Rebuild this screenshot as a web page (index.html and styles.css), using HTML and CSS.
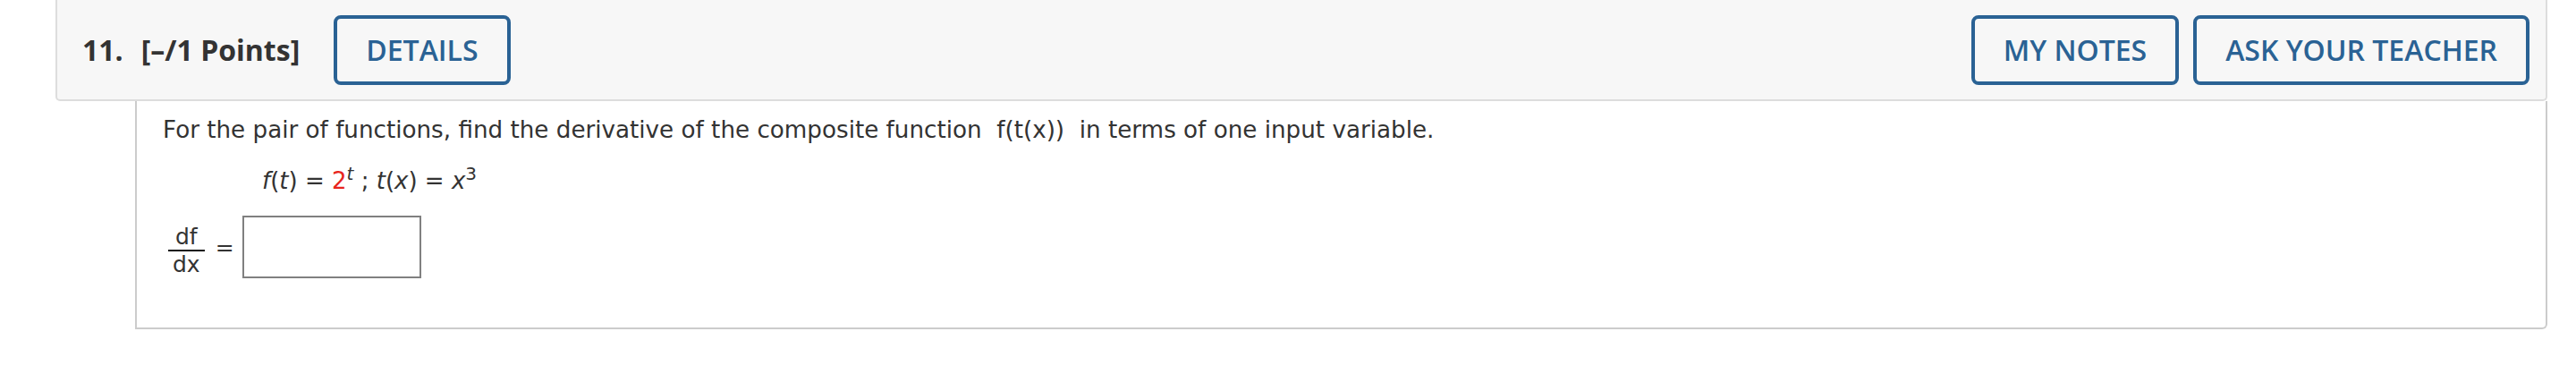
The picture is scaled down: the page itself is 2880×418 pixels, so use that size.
FILE: index.html
```html
<!DOCTYPE html>
<html lang="en">
<head>
<meta charset="utf-8">
<title>Question 11</title>
<link rel="stylesheet" href="styles.css">
</head>
<body>
<div class="question">
  <div class="q-header">
    <div class="q-title">
      <span class="q-num">11.</span>
      <span class="q-points">[–/1 Points]</span>
    </div>
    <button class="btn details">DETAILS</button>
    <div class="spacer"></div>
    <button class="btn">MY NOTES</button>
    <button class="btn">ASK YOUR TEACHER</button>
  </div>
  <div class="q-body">
    <p class="prompt">For the pair of functions, find the derivative of the composite function&nbsp; f(t(x))&nbsp; in terms of one input variable.</p>
    <p class="formula"><i>f</i>(<i>t</i>) = <span class="red">2</span><sup><i>t</i></sup> ; <i>t</i>(<i>x</i>) = <i>x</i><sup>3</sup></p>
    <div class="answer-row">
      <span class="frac"><span class="num">df</span><span class="den">dx</span></span>
      <span class="eq">=</span>
      <input class="answer" type="text" aria-label="answer">
    </div>
  </div>
</div>
</body>
</html>
```
FILE: styles.css
```css
html, body {
  margin: 0;
  padding: 0;
  background: #ffffff;
}
body {
  font-family: "DejaVu Sans", Verdana, sans-serif;
  color: #333333;
}
.question {
  margin-left: 62px;
  width: 2786px;
}
.q-header {
  display: flex;
  align-items: center;
  height: 111px;
  padding: 0 18px 0 28px;
  background: #f7f7f7;
  border: 2px solid #dddddd;
  border-top: none;
  border-radius: 0 0 5px 5px;
  gap: 16px;
}
.q-title {
  font-family: "Open Sans", sans-serif;
  font-weight: 700;
  font-size: 32px;
  color: #333333;
  display: flex;
  gap: 20px;
  margin-right: 22px;
}
.spacer { flex: 1; }
.btn {
  font-family: "Open Sans", sans-serif;
  font-weight: 600;
  font-size: 32px;
  color: #2a6294;
  background: transparent;
  border: 4px solid #2a6294;
  border-radius: 8px;
  height: 78px;
  padding: 0 32px;
  line-height: 1;
  margin: 0;
}
.q-body {
  margin-left: 89px;
  border: 2px solid #cccccc;
  border-top: none;
  border-radius: 0 0 6px 0;
  padding: 14px 29px 55px 29px;
}
.prompt {
  margin: 0;
  font-size: 26.2px;
  line-height: 36px;
}
.formula {
  margin: 21px 0 0 111px;
  font-size: 26px;
  line-height: 36px;
}
.formula sup {
  font-size: 20px;
  vertical-align: 10px;
  line-height: 0;
}
.red { color: #e8251d; }
.answer-row {
  display: flex;
  align-items: center;
  margin-top: 21px;
  margin-left: 6px;
}
.frac {
  display: inline-flex;
  flex-direction: column;
  align-items: stretch;
  text-align: center;
  font-size: 25px;
  line-height: 26px;
  margin-top: 8px;
}
.frac .num {
  border-bottom: 2px solid #111111;
  padding: 0 5px 1px;
}
.frac .den { padding: 2px 5px 0; }
.eq {
  font-size: 25px;
  margin: 0 9px 0 12px;
}
.answer {
  width: 196px;
  height: 66px;
  border: 2px solid #808080;
  padding: 0;
  margin: 0;
  box-sizing: content-box;
  background: #ffffff;
}
```
